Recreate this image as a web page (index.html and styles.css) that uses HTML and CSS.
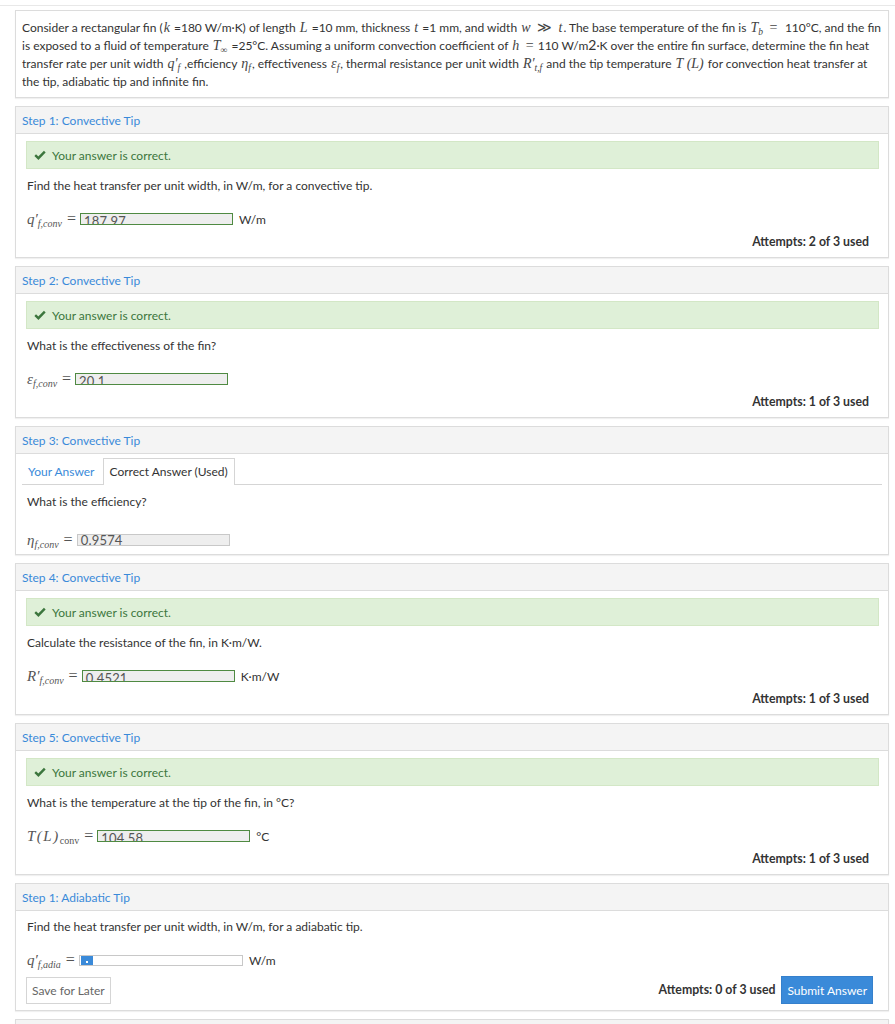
FILE: index.html
```html
<!DOCTYPE html>
<html lang="en">
<head>
    <meta charset="UTF-8">
    <meta name="viewport" content="width=device-width, initial-scale=1.0">
    <title>Fin Heat Transfer - Assignment</title>
    <link rel="stylesheet" href="styles.css">
</head>
<body>
    <div class="page">
        <div class="top-rule"></div>

        <div class="question">
            Consider a rectangular fin (<span class="m">k</span> =180 W/m·K) of length <span class="m">L</span> =10 mm, thickness <span class="m">t</span> =1 mm, and width <span class="m">w <span class="op">≫</span> t</span>. The base temperature of the fin is <span class="m">T<sub>b</sub> <span class="op">=</span> </span>110°C, and the fin
            is exposed to a fluid of temperature <span class="m">T<sub>∞</sub></span> =25°C. Assuming a uniform convection coefficient of <span class="m">h <span class="op">=</span></span>110 W/m<span class="big">2</span>·K over the entire fin surface, determine the fin heat
            transfer rate per unit width <span class="m">q′<sub>f</sub></span> ,efficiency <span class="m">η<sub>f</sub></span>, effectiveness <span class="m">ε<sub>f</sub></span>, thermal resistance per unit width <span class="m">R′<sub>t,f</sub></span> and the tip temperature <span class="m">T (L)</span> for convection heat transfer at
            the tip, adiabatic tip and infinite fin.
        </div>

        <section class="step">
            <div class="step-head">Step 1: Convective Tip</div>
            <div class="step-body">
                <div class="alert">
                    <svg class="check" width="12" height="10" viewBox="0 0 12 10"><path d="M1.2 5.2 L4.4 8.2 L10.8 1.6" fill="none" stroke="currentColor" stroke-width="2.4"/></svg>
                    Your answer is correct.
                </div>
                <p class="prompt">Find the heat transfer per unit width, in W/m, for a convective tip.</p>
                <div class="answer-row">
                    <span class="m label">q′<sub>f,conv</sub></span>
                    <span class="eq">=</span>
                    <span class="field correct">187.97</span>
                    <span class="unit">W/m</span>
                </div>
                <div class="attempts">Attempts: 2 of 3 used</div>
            </div>
        </section>

        <section class="step">
            <div class="step-head">Step 2: Convective Tip</div>
            <div class="step-body">
                <div class="alert">
                    <svg class="check" width="12" height="10" viewBox="0 0 12 10"><path d="M1.2 5.2 L4.4 8.2 L10.8 1.6" fill="none" stroke="currentColor" stroke-width="2.4"/></svg>
                    Your answer is correct.
                </div>
                <p class="prompt">What is the effectiveness of the fin?</p>
                <div class="answer-row">
                    <span class="m label">ε<sub>f,conv</sub></span>
                    <span class="eq">=</span>
                    <span class="field correct">20.1</span>
                </div>
                <div class="attempts">Attempts: 1 of 3 used</div>
            </div>
        </section>

        <section class="step">
            <div class="step-head">Step 3: Convective Tip</div>
            <div class="step-body tabbed">
                <div class="tabs">
                    <span class="tab">Your Answer</span>
                    <span class="tab active">Correct Answer (Used)</span>
                </div>
                <p class="prompt">What is the efficiency?</p>
                <div class="answer-row spaced">
                    <span class="m label">η<sub>f,conv</sub></span>
                    <span class="eq">=</span>
                    <span class="field used">0.9574</span>
                </div>
            </div>
        </section>

        <section class="step">
            <div class="step-head">Step 4: Convective Tip</div>
            <div class="step-body">
                <div class="alert">
                    <svg class="check" width="12" height="10" viewBox="0 0 12 10"><path d="M1.2 5.2 L4.4 8.2 L10.8 1.6" fill="none" stroke="currentColor" stroke-width="2.4"/></svg>
                    Your answer is correct.
                </div>
                <p class="prompt">Calculate the resistance of the fin, in K·m/W.</p>
                <div class="answer-row">
                    <span class="m label">R′<sub>f,conv</sub></span>
                    <span class="eq">=</span>
                    <span class="field correct">0.4521</span>
                    <span class="unit">K·m/W</span>
                </div>
                <div class="attempts">Attempts: 1 of 3 used</div>
            </div>
        </section>

        <section class="step">
            <div class="step-head">Step 5: Convective Tip</div>
            <div class="step-body">
                <div class="alert">
                    <svg class="check" width="12" height="10" viewBox="0 0 12 10"><path d="M1.2 5.2 L4.4 8.2 L10.8 1.6" fill="none" stroke="currentColor" stroke-width="2.4"/></svg>
                    Your answer is correct.
                </div>
                <p class="prompt">What is the temperature at the tip of the fin, in °C?</p>
                <div class="answer-row">
                    <span class="m label wide">T(L)<sub class="up">conv</sub></span>
                    <span class="eq">=</span>
                    <span class="field correct">104.58</span>
                    <span class="unit">°C</span>
                </div>
                <div class="attempts">Attempts: 1 of 3 used</div>
            </div>
        </section>

        <section class="step">
            <div class="step-head">Step 1: Adiabatic Tip</div>
            <div class="step-body last">
                <p class="prompt first">Find the heat transfer per unit width, in W/m, for a adiabatic tip.</p>
                <div class="answer-row">
                    <span class="m label">q′<sub>f,adia</sub></span>
                    <span class="eq">=</span>
                    <span class="field empty"><span class="caret"></span></span>
                    <span class="unit">W/m</span>
                </div>
                <div class="actions">
                    <button class="btn-save">Save for Later</button>
                    <span class="attempts inline">Attempts: 0 of 3 used</span>
                    <button class="btn-submit">Submit Answer</button>
                </div>
            </div>
        </section>

        <section class="step">
            <div class="step-head">Step 2: Adiabatic Tip</div>
        </section>
    </div>
</body>
</html>
```

FILE: styles.css
```css
:root {
    --text: #333333;
    --link: #3a8ad9;
    --border: #dcdcdc;
    --head-bg: #f4f4f4;
    --ok-bg: #dff0d8;
    --ok-border: #d3e7c6;
    --ok-text: #3c763d;
    --field-bg: #eeeeee;
}

body {
    margin: 0;
    background: #ffffff;
    font-family: Lato, 'Open Sans', sans-serif;
    font-size: 12px;
    color: var(--text);
}

.page {
    padding: 0 6px 0 15px;
}

.top-rule {
    height: 5px;
    border-bottom: 1px solid #e8e8e8;
    margin: 0 -6px 4px -15px;
}

.m {
    font-family: 'Liberation Serif', 'DejaVu Serif', serif;
    font-style: italic;
    font-size: 14px;
    line-height: 1;
    color: #444;
}

.question .m {
    padding: 0 1px;
}

.m sub {
    font-size: 9.5px;
    line-height: 0;
    vertical-align: -3px;
}

.m sub.up {
    font-style: normal;
}

.op {
    font-style: normal;
    margin: 0 3px;
}

.big {
    font-size: 14px;
    line-height: 1;
}

.question {
    border: 1px solid var(--border);
    padding: 8px 6px 6px;
    line-height: 18px;
    margin-bottom: 8px;
    box-shadow: 0 1px 1px rgba(0, 0, 0, 0.06);
}

.step {
    border: 1px solid var(--border);
    margin-bottom: 8px;
    box-shadow: 0 1px 1px rgba(0, 0, 0, 0.06);
}

.step-head {
    background: var(--head-bg);
    border-bottom: 1px solid var(--border);
    color: var(--link);
    padding: 0 6px;
    height: 26px;
    line-height: 27px;
}

.step-body {
    padding: 7px 9px 6px 10px;
}

.step-body.tabbed {
    padding-top: 5px;
    padding-bottom: 4px;
}

.step-body.last {
    padding-bottom: 6px;
}

.alert {
    display: flex;
    align-items: center;
    background: var(--ok-bg);
    border: 1px solid var(--ok-border);
    color: var(--ok-text);
    height: 26px;
    padding: 0 7px;
}

.check {
    margin-right: 6px;
}

.prompt {
    margin: 8px 0 0;
    line-height: 18px;
    padding-left: 1px;
}

.prompt.first {
    margin-top: 0;
}

.answer-row {
    display: flex;
    align-items: center;
    height: 20px;
    margin-top: 14px;
    padding-left: 1px;
}

.answer-row.spaced {
    margin-top: 19px;
}

.label {
    color: #555;
    font-size: 15px;
}

.label sub {
    font-size: 10px;
}

.label.wide {
    letter-spacing: 1.5px;
}

.label.wide sub {
    letter-spacing: 0;
}

.eq {
    font-family: 'Liberation Serif', serif;
    font-size: 16px;
    color: #555;
    margin: 0 4px 0 5px;
}

.field {
    box-sizing: border-box;
    width: 153px;
    height: 12px;
    background: var(--field-bg);
    border: 1px solid #bbb;
    color: #555;
    font-size: 13px;
    line-height: 14px;
    padding: 0 3px;
    overflow: hidden;
    letter-spacing: 0.2px;
}

.field.correct {
    border-color: #4f8a42;
}

.field.used {
    border-color: #c8c8c8;
    line-height: 11px;
}

.field.empty {
    width: 164px;
    height: 11px;
    background: #fff;
    border-color: #c8c8c8;
    padding: 0 1px;
}

.caret {
    display: block;
    width: 12px;
    height: 9px;
    background: #3a8ad9;
    position: relative;
}

.caret::after {
    content: '';
    position: absolute;
    left: 5px;
    bottom: 2px;
    width: 2px;
    height: 2px;
    background: #fff;
}

.unit {
    margin-left: 6px;
}

.attempts {
    text-align: right;
    font-weight: bold;
    font-size: 12.3px;
    line-height: 18px;
    margin-top: 4px;
    padding-right: 10px;
}

.tabs {
    display: flex;
    align-items: flex-end;
    border-bottom: 1px solid #d5d5d5;
    margin: 0 -3px 0 -4px;
    padding-left: 6px;
    height: 25px;
}

.tab {
    color: var(--link);
    padding: 0 8px 0 0;
    line-height: 24px;
}

.tab.active {
    color: var(--text);
    border: 1px solid #d5d5d5;
    border-bottom: none;
    background: #fff;
    padding: 0 6px;
    margin-bottom: -1px;
    line-height: 26px;
}

.actions {
    display: flex;
    align-items: center;
    margin-top: 6px;
}

.btn-save {
    font-family: inherit;
    font-size: 12px;
    color: #666;
    background: #fff;
    border: 1px solid #d5d5d5;
    height: 27px;
    padding: 0 5px;
}

.attempts.inline {
    margin: 0 6px 0 auto;
    padding: 0;
}

.btn-submit {
    font-family: inherit;
    font-size: 12px;
    color: #fff;
    background: #3a8ad9;
    border: 1px solid #3580cc;
    height: 28px;
    padding: 0 5px;
    margin-right: 6px;
}
```
